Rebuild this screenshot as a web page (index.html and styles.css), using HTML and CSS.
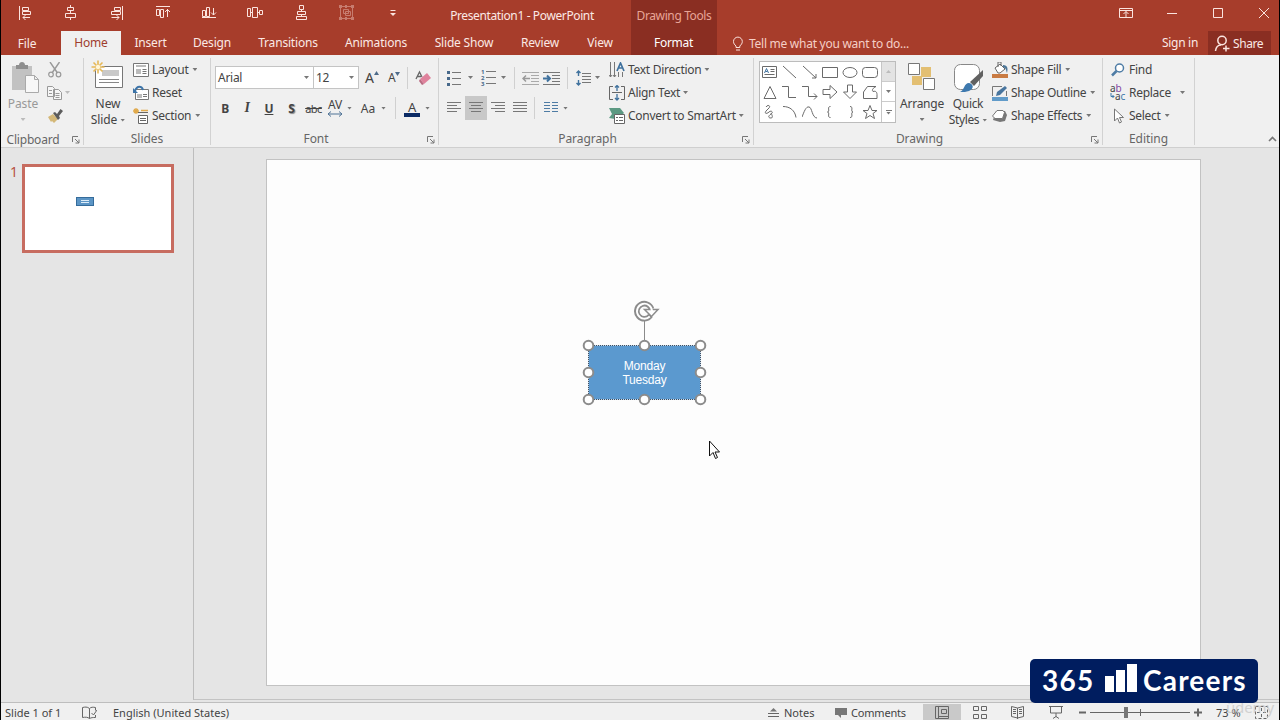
FILE: index.html
```html
<!DOCTYPE html>
<html lang="en">
<head>
<meta charset="utf-8">
<title>Presentation1 - PowerPoint</title>
<link rel="stylesheet" href="styles.css">
</head>
<body>
<div class="app">
  <header class="titlebar">
    <div class="qat">
      <span><svg width="16" height="16"><path d="M2.5 1v14M5.500 2.500h6v3h-6zM5.500 6.500h8v3h-8zM13 12.500H6M8.500 10l-2.500 2.500 2.500 2.500"/></svg></span>
      <span><svg width="16" height="16"><path d="M7.500 0v2M7.500 6v2M7.500 13v2M4.500 2.500h6v3h-6zM2.500 8.500h10v4h-10z"/></svg></span>
      <span><svg width="16" height="16"><path d="M13.500 1v14M5.500 2.500h6v3h-6zM2.500 6.500h9v3h-9zM2.500 12.500H10M7.500 10l2.500 2.500-2.500 2.500"/></svg></span>
      <span><svg width="16" height="16"><path d="M1 1.500h14M1.500 4.500h3v6h-3zM5.500 4.500h3v8h-3zM12.500 12V4M10 7l2.500-2.500L15 7"/></svg></span>
      <span><svg width="16" height="16"><path d="M1 12.500h14M1.500 5.500h3v6h-3zM5.500 2.500h3v9h-3zM12.500 3v7M10 7.500l2.500 2.500 2.500-2.500"/></svg></span>
      <span><svg width="16" height="16"><path d="M.500 3.500h3v8h-3zM5.500 2.500h5v10h-5zM12.500 5.500h3v4h-3zM3.500 7.500h2M10.500 7.500h2"/></svg></span>
      <span><svg width="16" height="16"><path d="M6.500.500h4v4h-4zM4.500 6.500h8v3h-8zM3.500 11.500h10v3h-10zM8.500 4.500v2M8.500 9.500v2"/></svg></span>
      <span class="faded"><svg width="18" height="16"><path d="M2.500 1.500h12v12h-12zM5.500 4.500h5v4h-5zM7.500 6.500h5v4h-5z"/><path class="solid" d="M1 0h3v3H1zM13 0h3v3h-3zM1 12h3v3H1zM13 12h3v3h-3zM7 0h2v3H7zM7 12h2v3H7z"/></svg></span>
      <span><svg width="8" height="8"><path d="M1.500 1.500h5"/><path class="solid" d="M1 4h6L4 7z"/></svg></span>
    </div>
    <div class="doc-title">Presentation1 - PowerPoint</div>
    <div class="context-title">Drawing Tools</div>
    <div class="window-controls">
      <span><svg width="14" height="12"><path d="M.500 1.500h13v9H.500zM.500 3.500h13M7 10V4.500M4.500 7L7 4.500 9.500 7"/></svg></span>
      <span><svg width="12" height="12"><path d="M1 6.500h10"/></svg></span>
      <span><svg width="12" height="12"><path d="M1.500 1.500h9v9h-9z"/></svg></span>
      <span><svg width="12" height="12"><path d="M1 1l10 10M11 1L1 11"/></svg></span>
    </div>
  </header>

  <nav class="tabs">
    <span class="file">File</span>
    <span class="active">Home</span>
    <span>Insert</span>
    <span>Design</span>
    <span>Transitions</span>
    <span>Animations</span>
    <span>Slide Show</span>
    <span>Review</span>
    <span>View</span>
    <span class="format">Format</span>
    <span class="tellme"><svg width="12" height="16"><path d="M4 11.500V10C2.500 8.500 1.500 7.500 1.500 5.500a4.400 4.400 0 0 1 8.800 0c0 2-1 3-2.500 4.500v1.500zM4 14h4"/></svg>Tell me what you want to do...</span>
    <span class="signin">Sign in</span>
    <span class="share"><svg width="17" height="17"><path class="bold" d="M1.500 16c.5-4 2-6 5.500-6M12 10.500v6M9 13.500h6.500"/><circle class="bold" cx="8" cy="5.500" r="4.200"/></svg>Share</span>
  </nav>

  <section class="ribbon">
    <div class="group clipboard">
      <div class="body">
        <div class="big paste">
          <svg class="big-icon" width="32" height="36"><path fill="#c2c2c2" d="M3 8h20v24H3z"/><path fill="#8e8e8e" d="M7 11V7h3c0-4 6-4 6 0h3v4z"/><path fill="#f8f8f8" stroke="#aaa" d="M16.500 17.500h9l4 4v13h-13zM25.500 17.500v4h4"/></svg>
          <span>Paste</span><i class="caret"></i>
        </div>
        <div class="stack">
          <div><svg width="16" height="16"><path stroke="#999" stroke-width="1.400" fill="none" d="M3 0l7.500 11M12.500 0L5 11"/><g fill="none" stroke="#999" stroke-width="1.200"><circle cx="4" cy="12.500" r="2.300"/><circle cx="11.500" cy="12.500" r="2.300"/></g></svg></div>
          <div><svg width="16" height="16"><path fill="#f6f6f6" stroke="#999" d="M.500 1.500h5l2 2v8h-7zM6.500 4.500h5l3 3v7h-8zM2 5.500h3M2 8.500h3M8.500 8.500h4M8.500 10.500h4M8.500 12.500h4"/></svg><i class="caret"></i></div>
          <div><svg width="16" height="16"><path fill="#d4b878" d="M1 9l5-3 5 5-4 4-2-2-1 1z"/><path fill="#5c5c5c" d="M6 5l2-1 2 2 3.500-5L16 3l-4 5 1 2-2 2z"/></svg></div>
        </div>
      </div>
      <footer><span>Clipboard</span><svg class="launch" width="8" height="8"><path d="M.500 6V.500H6M3 3l4 4M7 3.500V7H3.500"/></svg></footer>
    </div>

    <div class="group slides">
      <div class="body">
        <div class="big newslide">
          <svg class="big-icon" width="34" height="34"><path fill="#fff" stroke="#777" d="M5.500 8.500h27v21h-27z"/><path fill="#c9c9c9" d="M12 12h17v6H12z"/><path stroke="#888" d="M9 21.500h20M9 24.500h20"/><circle cx="8" cy="9" r="4" fill="#f0f0f0"/><path stroke="#e6b855" stroke-width="1.600" d="M8 2.500v13M1.500 9h13M3.500 4.500l9 9M12.500 4.500l-9 9"/><circle cx="8" cy="9" r="2.200" fill="#fff5d8"/></svg>
          <span>New</span><span>Slide<i class="caret"></i></span>
        </div>
        <div class="stack">
          <div><svg width="16" height="16"><path fill="#fff" stroke="#777" d="M.500 1.500h15v13H.500z"/><path fill="#bbb" d="M3 3h10v2H3zM3 7h5v5H3z"/><path stroke="#777" d="M9.500 7.500h4M9.500 9.500h4M9.500 11.500h4"/></svg>Layout<i class="caret"></i></div>
          <div><svg width="16" height="16"><path fill="#fff" stroke="#777" d="M2.500 4.500h13v10h-13z"/><path fill="#bbb" d="M4 9h5v4H4z"/><path stroke="#777" d="M10 9.500h4M10 11.500h4"/><path fill="none" stroke="#3d74a8" stroke-width="2" d="M2 6C4 0 9 1 10 5"/><path fill="#3d74a8" d="M0 3l5 5H0z"/></svg>Reset</div>
          <div><svg width="16" height="16"><path stroke="#e0a94a" stroke-width="1.300" d="M3 0v6M0 3h6M1 1l4 4M5 1L1 5M8 2.500h7"/><path fill="#fff" stroke="#666" d="M5.500 7.500h9v8h-9zM5 4.500h10M7 10.500h6M7 12.500h6"/></svg>Section<i class="caret"></i></div>
        </div>
      </div>
      <footer><span>Slides</span></footer>
    </div>

    <div class="group font">
      <div class="body column">
        <div class="tools first">
          <span class="combo family">Arial<i class="caret"></i></span><span class="combo size">12<i class="caret"></i></span>
          <span class="grow">A<svg width="5" height="4"><path d="M0 4l2.500-4L5 4z"/></svg></span>
          <span class="shrink">A<svg width="5" height="4"><path d="M0 0h5L2.500 4z"/></svg></span>
          <b class="divider"></b>
          <span class="eraser"><svg width="16" height="16"><path fill="none" stroke="#666" stroke-width="1.300" d="M1 9l3.500-7L7 7M2.500 6.500H6"/><path fill="#df829c" d="M5 9l7-6 4 5-7 6z"/><path fill="#b96981" d="M4 11l1-2 4 5-2 1z"/></svg></span>
        </div>
        <div class="tools second">
          <span class="fb">B</span><span class="fi">I</span><span class="fu">U</span><span class="fs">S</span><span class="abc">abc</span>
          <span class="av"><em>AV</em><svg width="16" height="6"><path fill="none" stroke="#4f7396" d="M1 3h14M4 .500L1 3l3 2.500M12 .500L15 3l-3 2.500"/></svg></span><i class="caret"></i>
          <span class="case">Aa</span><i class="caret"></i><b class="divider"></b>
          <span class="color">A</span><i class="caret"></i>
        </div>
      </div>
      <footer><span>Font</span><svg class="launch" width="8" height="8"><path d="M.500 6V.500H6M3 3l4 4M7 3.500V7H3.500"/></svg></footer>
    </div>

    <div class="group paragraph">
      <div class="body">
        <div class="para-tools">
          <div class="tools first">
            <svg width="14" height="16"><path stroke="#777" d="M5 2.500h9M5 8.500h9M5 14.500h9"/><path fill="#47698b" d="M0 1h3v3H0zM0 7h3v3H0zM0 13h3v3H0z"/></svg><i class="caret"></i>
            <span class="numbers"><span>1</span><span>2</span><span>3</span></span><i class="caret"></i>
            <b class="divider"></b>
            <svg class="outdent" width="17" height="14"><path stroke="#aaa" d="M0 1.500h17M9 4.500h8M9 7.500h8M9 10.500h8M0 13.500h17"/><path fill="none" stroke="#999" stroke-width="1.500" d="M8 7.500H1M4 4.500L1 7.500l3 3"/></svg>
            <svg class="indent" width="17" height="14"><path stroke="#777" d="M0 1.500h17M9 4.500h8M9 7.500h8M9 10.500h8M0 13.500h17"/><path fill="none" stroke="#3f719d" stroke-width="2" d="M0 7.500h7M4 4.500l3 3-3 3"/></svg>
            <b class="divider"></b>
            <svg class="spacing" width="15" height="16"><path stroke="#777" d="M6 3.500h9M6 6.500h9M6 9.500h9M6 12.500h9"/><path fill="none" stroke="#3f719d" stroke-width="1.400" d="M2.500 1v5M.500 3l2-2 2 2M2.500 15v-5M.500 13l2 2 2-2"/></svg><i class="caret"></i>
          </div>
          <div class="tools second">
            <span><svg width="14" height="12"><path d="M0 .500h14M0 3.500h10M0 6.500h14M0 9.500h10"/></svg></span>
            <span class="on"><svg width="14" height="12"><path d="M0 .500h14M2 3.500h10M0 6.500h14M2 9.500h10"/></svg></span>
            <span><svg width="14" height="12"><path d="M0 .500h14M4 3.500h10M0 6.500h14M4 9.500h10"/></svg></span>
            <span><svg width="14" height="12"><path d="M0 .500h14M0 3.500h14M0 6.500h14M0 9.500h14"/></svg></span>
            <b class="divider"></b>
            <svg class="cols" width="14" height="12"><path d="M0 .500h6M0 3.500h6M0 6.500h6M0 9.500h6M8 .500h6M8 3.500h6M8 6.500h6M8 9.500h6"/></svg><i class="caret"></i>
          </div>
        </div>
        <div class="stack">
          <div><svg width="16" height="16"><path fill="none" stroke="#777" d="M1.500 0v15M5.500 0v15M9.500 10v5M13.500 10v5M0 13l1.500 2L3 13M4 13l1.500 2L7 13"/><path fill="none" stroke="#3f719d" stroke-width="1.700" d="M8 9l3.500-8L15 9M9.500 6h4"/></svg>Text Direction<i class="caret"></i></div>
          <div><svg width="16" height="16"><path fill="none" stroke="#666" d="M4 1.500H.500v13H4M12 1.500h3.500v13H12M3 7.500h10"/><path fill="none" stroke="#3f719d" stroke-width="1.300" d="M8 0v6M6 2.500L8 .500l2 2M8 9v6M6 13l2 2 2-2"/></svg>Align Text<i class="caret"></i></div>
          <div><svg width="16" height="16"><path fill="#5c9982" d="M0 0h11l4 5-2 2H6v4l-6-1 3-4z"/><path fill="#fff" stroke="#666" d="M5.500 6.500h10v9h-10z"/><path stroke="#666" d="M7 9.500h2M10 9.500h4M7 12.500h2M10 12.500h4"/></svg>Convert to SmartArt<i class="caret"></i></div>
        </div>
      </div>
      <footer><span>Paragraph</span><svg class="launch" width="8" height="8"><path d="M.500 6V.500H6M3 3l4 4M7 3.500V7H3.500"/></svg></footer>
    </div>

    <div class="group drawing">
      <div class="body">
        <div class="gallery">
          <div class="shapes">
            <svg width="16" height="16"><path d="M.500 2.500h14v11H.500zM8.500 5.500h4M8.500 7.500h4M2.500 10.500h10"/><path class="blue" d="M2.500 9L4.500 4.500 6.500 9M3.500 7.500h2"/></svg>
            <svg width="16" height="16"><path d="M1 2l13 12"/></svg>
            <svg width="16" height="16"><path d="M1 2l13 12M14 10v4h-4"/></svg>
            <svg width="16" height="16"><path d="M.500 3.500h15v10H.500z"/></svg>
            <svg width="16" height="16"><ellipse cx="8" cy="8.500" rx="7" ry="5"/></svg>
            <svg width="16" height="16"><rect x=".500" y="3.500" width="15" height="10" rx="3"/></svg>
            <svg width="16" height="16"><path d="M8 2.500l6 12H2z"/></svg>
            <svg width="16" height="16"><path d="M0 2.500h6.500v11H14"/></svg>
            <svg width="16" height="16"><path d="M0 2.500h6.500v10H15M12 9.500l3 3-3 3"/></svg>
            <svg width="16" height="16"><path d="M1 5.500h7v-4l7 6.500-7 6.500v-4H1z"/></svg>
            <svg width="16" height="16"><path d="M5.500 1v7h-4L8 14.500 14.500 8h-4V1z"/></svg>
            <svg width="16" height="16"><path d="M5.500 2.500h8.500C11 4 9.500 6 11 7.500c3-1 4 1 4 3v4H1.500V8z"/></svg>
            <svg width="16" height="16"><path d="M4 3c2-3 5-1 3 1L4 7c-2 3 1 3 3 1s5 0 2 2-3 4 0 4 0-5 0-5"/></svg>
            <svg width="16" height="16"><path d="M1 2.500c7 0 12 4 13 11"/></svg>
            <svg width="16" height="16"><path d="M0 13C2 8 4 2 7 3c3 0 3 11 8 11"/></svg>
            <svg width="16" height="16"><path d="M8.500 2.500c-4 0 0 5-3 5.500 3 .5-1 5.500 3 5.500"/></svg>
            <svg width="16" height="16"><path d="M8 2.500c4 0 0 5 3 5.500-3 .5 1 5.500-3 5.500"/></svg>
            <svg width="16" height="16"><path d="M8 1.500l2 5h5l-4 3 1.500 5L8 11.500l-4.500 3L5 9.500l-4-3h5z"/></svg>
          </div>
          <div class="scroll"><span class="off"><i class="caret up"></i></span><span><i class="caret"></i></span><span class="more"><i class="caret"></i></span></div>
        </div>
        <div class="big arrange">
          <svg class="big-icon" width="28" height="34"><path fill="#e3bf72" d="M13 9h10v10H13zM4 18h10v9H4z"/><path fill="#fff" stroke="#777" d="M.500 5.500h11v11H.500zM15.500 20.500h11v11h-11z"/></svg>
          <span>Arrange</span><i class="caret"></i>
        </div>
        <div class="big quick">
          <svg class="big-icon" width="32" height="36"><rect x="2.500" y="6.500" width="25" height="25" rx="6" fill="#fff" stroke="#888"/><path fill="#616161" d="M31 12v6l-9 10-4-4z"/><path fill="#3e79ae" d="M8 34c4-1 4-9 9-9 5 1 5 6 0 8-3 1-5 1-9 1z"/></svg>
          <span>Quick</span><span>Styles<i class="caret"></i></span>
        </div>
        <div class="stack">
          <div><svg width="16" height="16"><path fill="#fff" stroke="#666" d="M3 6l5-4 5 5-5 4H6zM6 5V0h3v4"/><path fill="#4c7799" d="M11 3c5 0 5 4 4 8-1-3-1-5-4-6z"/><path fill="#c97b43" d="M0 12h16v4H0z"/></svg>Shape Fill<i class="caret"></i></div>
          <div><svg width="16" height="16"><path fill="none" stroke="#777" d="M10 1.500H.500V11M14.500 6v5"/><path fill="#48759e" d="M4 11l1-4 8-6 2 2-7 7z"/><path fill="#619bc9" d="M0 12h16v4H0z"/></svg>Shape Outline<i class="caret"></i></div>
          <div><svg width="16" height="16"><path fill="#777" d="M4 3h9l2 4-2 6-5 1-7-2z"/><path fill="#fff" stroke="#777" d="M5 2.500h6l1.500 2-2 6H3L.500 8z"/></svg>Shape Effects<i class="caret"></i></div>
        </div>
      </div>
      <footer><span>Drawing</span><svg class="launch" width="8" height="8"><path d="M.500 6V.500H6M3 3l4 4M7 3.500V7H3.500"/></svg></footer>
    </div>

    <div class="group editing">
      <div class="body">
        <div class="stack">
          <div><svg width="16" height="16"><circle cx="9.500" cy="6" r="4" fill="#fff" stroke="#4e7ca5" stroke-width="1.500"/><path stroke="#4e7ca5" stroke-width="2.500" d="M6.500 9L2 13.500"/></svg>Find</div>
          <div><span class="replace"><span>a<em>b</em></span><span class="to"><svg width="5" height="6"><path d="M1 0v3.500h3M2.500 2L4 3.500 2.500 5"/></svg>a<strong>c</strong></span></span>Replace<i class="caret"></i></div>
          <div><svg width="16" height="16"><path fill="#fff" stroke="#777" d="M4.500 1v12l3-3 2 5 2-1-2-4.500h4z"/></svg>Select<i class="caret"></i></div>
        </div>
      </div>
      <footer><span>Editing</span></footer>
    </div>
    <svg class="collapse" width="9" height="6"><path d="M1 5l3.500-3.500L8 5"/></svg>
  </section>

  <main class="workspace">
    <aside class="thumbs">
      <span class="number">1</span>
      <div class="thumb"><div class="mini"><i></i><i></i></div></div>
    </aside>
    <div class="canvas">
      <div class="slide">
        <div class="shape">
          Monday<br>Tuesday
          <svg class="selection" width="128" height="110"><path stroke="#8b8b8b" d="M64.500 21v24"/><path fill="none" stroke="#c5daee" d="M8 45.500h113M8 99.500h113M8.500 45v55M120.500 45v55"/><path fill="none" stroke="#3f4f60" stroke-dasharray="1 1" d="M8 45.500h113M8 99.500h113M8.500 45v55M120.500 45v55"/><g fill="#fff" stroke="#8c8c8c" stroke-width="2"><circle cx="8.500" cy="45.500" r="4.800"/><circle cx="64.500" cy="45.500" r="4.800"/><circle cx="120.500" cy="45.500" r="4.800"/><circle cx="8.500" cy="72.500" r="4.800"/><circle cx="120.500" cy="72.500" r="4.800"/><circle cx="8.500" cy="99.500" r="4.800"/><circle cx="64.500" cy="99.500" r="4.800"/><circle cx="120.500" cy="99.500" r="4.800"/></g><path fill="none" stroke="#8c8c8c" stroke-width="5.600" d="M70.500 15.500A7.500 7.500 0 1 1 71.500 9"/><path fill="#fff" stroke="#8c8c8c" stroke-width="1.500" d="M64.500 9.500H78L71.500 16.500z"/><path fill="none" stroke="#fff" stroke-width="1.900" d="M69.800 16.500A7.500 7.500 0 1 1 72 11"/></svg>
        </div>
        <svg class="cursor" width="13" height="21"><path fill="#fff" stroke="#111" d="M1.500 1v15l3.500-3.500 2.500 6 2-1-2.500-5.500h4.500z"/></svg>
      </div>
    </div>
  </main>

  <footer class="status">
    <span class="slide-no">Slide 1 of 1</span>
    <svg class="spell" width="15" height="13"><path d="M7.500 2.500C5 .500 3 1 .500 1.500v10c3-.5 5-.5 7 1zM7.500 2.500C9 1 11 1 13.500 1.500v3M7.500 12.500c2-1 3-1 6-1V9M9.500 7l2 2L15 4"/></svg>
    <span class="lang">English (United States)</span>
    <svg class="notes-icon" width="11" height="12"><path d="M0 6.500h11M0 9.500h11"/><path class="solid" d="M2 4.500L5.500 1 9 4.500z"/></svg>
    <span class="notes">Notes</span>
    <svg class="comment-icon" width="12" height="12"><path class="solid" d="M0 1h12v7H6v3L3 8H0z"/></svg>
    <span class="comments">Comments</span>
    <span class="view on"><svg width="14" height="13"><path d="M.500.500h13v12H.500zM3.500.500v12M6.500 3.500h5v4h-5zM3.500 10.500h10"/></svg></span>
    <span class="view"><svg width="14" height="13"><path d="M.500.500h5v4h-5zM8.500.500h5v4h-5zM.500 8.500h5v4h-5zM8.500 8.500h5v4h-5z"/></svg></span>
    <span class="view"><svg width="14" height="13"><path d="M6.500 2L.500.500v10l6 1.500 6-1.500V.500zM6.500 2v11M2 3.500h3M2 5.500h3M2 7.500h3M8 3.500h3M8 5.500h3M8 7.500h3"/></svg></span>
    <span class="view"><svg width="14" height="13"><path d="M0 .500h14M1.500 1v6h11V1M7 7v4M4 12.500l3-2 3 2"/></svg></span>
    <svg class="zoom" width="124" height="13"><path d="M11 6.500h100M61.500 3v7"/><path class="bold" d="M0 6.500h7M115 6.500h8M119 2.500v8"/><path class="solid" d="M45 1h4v11h-4z"/></svg>
    <span class="percent">73 %</span>
    <svg class="fit" width="14" height="13"><path stroke-dasharray="3 2" d="M.500.500h12v12H.500z"/><path d="M6.500 2v3M6.500 8v3M2 6.500h3M8 6.500h3"/></svg>
  </footer>
  <div class="watermark">ûdemy</div>
  <div class="brand"><span class="num">365</span><svg width="32" height="28"><path fill="#fff" d="M0 12h9v16H0zM11 6h9v22h-9zM22 0h10v28H22z"/></svg><span>Careers</span></div>
</div>
</body>
</html>
```
FILE: styles.css
```css
* { box-sizing: border-box; }
body { margin: 0; background: #000; font-family: "Noto Sans", sans-serif; font-size: 12px; color: #444; overflow: hidden; }
svg { display: block; flex: none; }
.app { position: relative; width: 1280px; height: 720px; padding: 0 1px; display: flex; flex-direction: column; white-space: nowrap; letter-spacing: -.15px; overflow: hidden; }

.titlebar { height: 31px; flex: none; background: #a73d2b; display: flex; color: #fbe9e5; overflow: hidden; letter-spacing: -.38px; }
.titlebar > div { flex: none; }
.titlebar svg path, .tabs svg path, .tabs svg circle { fill: none; stroke: #fbe4df; }
.titlebar svg .solid { fill: #fbe4df; stroke: none; }
.tabs svg .bold { stroke-width: 1.5; }
.qat { display: flex; margin-left: 1px; height: 26px; }
.qat span, .window-controls span { width: 46px; flex: none; display: flex; align-items: center; justify-content: center; }
.qat .faded { opacity: .38; }
.doc-title { width: 212px; text-align: center; line-height: 31px; }
.context-title { width: 86px; margin-left: 3px; text-align: center; line-height: 31px; background: #8a2e22; color: #e8a597; }
.window-controls { display: flex; margin-left: 386px; height: 26px; }

.tabs { height: 24px; flex: none; background: #a73d2b; color: #fbe9e5; display: grid; grid-template-columns: 52px 8px 60px 59px 64px 88px 88px 88px 64px 56px 3px 86px 440px 46px 5px 63px; line-height: 24px; text-align: center; letter-spacing: -.18px; }
.tabs .active { grid-column: 3; background: #f0f0f0; color: #9e3e2e; }
.tabs .format { grid-column: 12; background: #8a2e22; color: #fff; letter-spacing: -.3px; padding-right: 1px; }
.tabs .tellme { display: flex; align-items: center; gap: 5px; padding-left: 15px; color: #f5cfc6; letter-spacing: -.27px; }
.tabs .file { line-height: 26px; }
.tabs .signin { letter-spacing: -.3px; }
.tabs .share { grid-column: 16; background: #8a2e22; display: flex; align-items: center; gap: 2px; padding-left: 6px; margin-bottom: 1px; letter-spacing: -.4px; }

.ribbon { height: 93px; flex: none; background: #f0f0f0; border-bottom: 1px solid #cfcfcf; display: flex; letter-spacing: -.28px; }
.group { display: flex; flex-direction: column; flex: none; border-right: 1px solid #d2d2d2; margin-top: 3px; height: 87px; }
.clipboard { width: 83px; }
.slides { width: 127px; }
.font { width: 228px; }
.paragraph { width: 315px; }
.drawing { width: 349px; }
.editing { width: 92px; }
.body { display: flex; height: 71px; flex: none; }
.body.column { flex-direction: column; }
.group footer { height: 19px; flex: none; line-height: 20px; display: grid; grid-template-columns: 1fr; color: #666; align-items: center; justify-items: center; letter-spacing: -.05px; }
.group footer > * { grid-row: 1; grid-column: 1; }
.group footer span { margin-right: 17px; }
.clipboard footer span { padding-top: 1px; margin-right: 18px; letter-spacing: -.2px; }
.slides footer span, .editing footer span { margin-right: 0; }
.group footer .launch { justify-self: end; margin: 1px 3px 0 0; }
.launch path, .collapse path { fill: none; stroke: #777; }
.collapse path { stroke-width: 1.6; }
.collapse { margin: 81px 0 0 73px; }
.caret { display: inline-block; width: 5px; height: 3px; background: #777; clip-path: polygon(0 0, 100% 0, 50% 100%); flex: none; }
.caret.up { transform: rotate(180deg); background: #bbb; }
.stack { display: flex; flex-direction: column; }
.stack > div { height: 23px; display: flex; align-items: center; gap: 3px; }
.stack .caret { margin-left: 1px; }
.big { display: flex; flex-direction: column; align-items: center; line-height: 16px; letter-spacing: -.1px; }
.big .big-icon { height: 38px; }
.big > .caret { margin-top: 6px; }
.big span { display: flex; align-items: center; gap: 3px; }
.paste { width: 44px; color: #999; }
.paste .big-icon { margin-left: 3px; }
.paste .caret, .clipboard .stack .caret { background: #bbb; }
.clipboard .stack { margin-left: 2px; }
.clipboard .stack > div { gap: 1px; }
.newslide { width: 48px; }
.newslide .big-icon { margin-right: 2px; }
.slides .stack { margin-left: 1px; }
.divider { width: 1px; height: 22px; background: #d0d0d0; flex: none; }
.tools { display: flex; align-items: center; }
.tools.first { height: 23px; margin-top: 8px; }
.tools.second { height: 24px; margin-top: 7px; }

.font .first { padding-left: 4px; }
.font .second { padding-left: 3px; }
.combo { height: 23px; border: 1px solid #c4c4c4; background: #fff; display: flex; align-items: center; justify-content: space-between; padding: 0 4px 0 2px; }
.family { width: 99px; }
.size { width: 46px; margin-left: -1px; }
.grow { font-size: 14px; width: 23px; display: flex; margin-left: 6px; }
.shrink { font-size: 12px; width: 19px; display: flex; }
.grow svg, .shrink svg { margin-top: 3px; fill: #4d6b8a; }
.eraser { margin-left: 7px; }
.fb, .fi, .fu, .fs { width: 22px; text-align: center; font-weight: bold; }
.fi { font-style: italic; font-family: "Liberation Serif", serif; font-size: 14px; }
.fu { text-decoration: underline; }
.fs { text-shadow: 1px 1px 1px #888; width: 23px; }
.abc { width: 21px; font-size: 11px; text-decoration: line-through; text-align: center; letter-spacing: -.5px; }
.av { width: 22px; display: flex; flex-direction: column; align-items: center; }
.av em { font-style: normal; line-height: 12px; }
.av + .caret { margin-left: 1px; }
.case { width: 26px; text-align: center; margin-left: 3px; letter-spacing: 0; }
.font .second .divider { margin: 0 8px 0 9px; }
.color { width: 16px; height: 17px; line-height: 14px; font-size: 13px; border-bottom: 4px solid #0b2a64; text-align: center; }
.color + .caret { margin-left: 5px; }

.para-tools { width: 170px; }
.para-tools .first { padding-left: 8px; }
.para-tools .first > .caret { margin-left: 7px; margin-right: 8px; }
.numbers { width: 15px; height: 18px; display: grid; grid-template-rows: repeat(3, 6px); font-size: 6px; line-height: 6px; font-weight: bold; color: #47698b; }
.numbers span { display: flex; align-items: center; gap: 2px; }
.numbers span::after { content: ""; flex: 1; height: 1px; background: #777; }
.para-tools .numbers + .caret { margin-left: 5px; }
.outdent { margin-left: 7px; }
.indent { margin: 0 7px 0 4px; }
.spacing { margin-left: 8px; }
.para-tools .first .spacing + .caret { margin-left: 4px; }
.para-tools .second { padding-left: 4px; }
.para-tools .second span { width: 22px; height: 24px; flex: none; display: flex; align-items: center; justify-content: center; }
.para-tools .second svg { stroke: #777; }
.para-tools .second .on { background: #c8c8c8; }
.para-tools .second .divider { margin: 0 9px 0 3px; }
.para-tools .second .cols { stroke: #4f7ca4; }
.cols + .caret { margin-left: 5px; }
.paragraph .stack .caret { margin-left: 0; }

.gallery { margin: 3px 0 0 5px; width: 137px; height: 62px; display: flex; border: 1px solid #bcbcbc; background: #fff; }
.shapes { display: grid; grid-template-columns: repeat(6, 20px); grid-template-rows: repeat(3, 20px); align-items: center; justify-items: center; width: 121px; }
.shapes svg { fill: none; stroke: #6a6a6a; }
.shapes .blue { stroke: #3f719d; }
.scroll { width: 14px; border-left: 1px solid #c6c6c6; display: grid; grid-template-rows: repeat(3, 1fr); }
.scroll span { display: flex; align-items: center; justify-content: center; border-bottom: 1px solid #ccc; }
.scroll .off { background: #e3e3e3; }
.scroll .more { border: 0; flex-direction: column; gap: 1px; }
.more::before { content: ""; width: 6px; height: 1px; background: #777; }
.arrange { width: 52px; letter-spacing: -.25px; }
.quick { width: 40px; letter-spacing: -.35px; }
.drawing .stack { margin-left: 4px; }
.drawing .stack > div { letter-spacing: -.33px; }
.editing .stack { margin-left: 7px; }
.replace { width: 16px; font-size: 10px; line-height: 8px; display: flex; flex-direction: column; letter-spacing: -.2px; padding-bottom: 2px; flex: none; }
.replace em { font-style: normal; color: #8244a0; }
.replace strong { font-weight: normal; color: #3c78a9; }
.replace .to { display: flex; }
.replace .to svg { margin-top: 1px; fill: none; stroke: #3c78a9; }
.editing .replace ~ .caret { margin-left: 6px; }

.workspace { height: 554px; flex: none; background: #e5e5e5; display: flex; }
.thumbs { width: 193px; border-right: 1px solid #bdbdbd; display: flex; padding: 16px 0 0 9px; height: 552px; }
.number { width: 12px; color: #b85143; font-size: 14px; line-height: 16px; }
.thumb { width: 152px; height: 89px; border: 3px solid #c76c60; background: #fff; padding: 30px 0 0 51px; }
.mini { width: 18px; height: 9px; background: #5c95c5; border: 1px solid #356c9b; display: flex; flex-direction: column; align-items: center; justify-content: center; gap: 1px; }
.mini i { width: 8px; height: 1px; background: #dcecf8; }
.canvas { flex: 1; border-bottom: 1px solid #c3c3c3; height: 552px; padding: 11px 0 0 72px; margin-left: 0; }
.slide { width: 935px; height: 527px; border: 1px solid #c2c2c2; background: #fdfdfd; position: relative; }
.shape { position: absolute; left: 321px; top: 185px; width: 113px; height: 55px; background: #5b99cf; color: #fff; font: 12px/14px "Liberation Sans", Arial, sans-serif; letter-spacing: -.2px; text-align: center; padding-top: 14px; }
.selection { position: absolute; left: -8px; top: -45px; }
.cursor { position: absolute; left: 441px; top: 280px; }

.status { height: 18px; flex: none; background: #f0f0f0; border-top: 1px solid #bebebe; display: flex; align-items: center; font-size: 11px; padding: 2px 0 0 4px; letter-spacing: 0; }
.status svg { fill: none; stroke: #666; }
.status .solid { fill: #777; stroke: none; }
.status .bold { stroke-width: 2; }
.slide-no { width: 77px; }
.spell { margin-right: 16px; }
.lang { width: 655px; }
.notes-icon { margin-right: 5px; }
.notes { width: 51px; }
.comment-icon { margin-right: 4px; }
.comments { width: 72px; letter-spacing: -.2px; }
.view { width: 38px; height: 18px; display: flex; align-items: center; justify-content: center; flex: none; }
.view.on { background: #c9c9c9; }
.zoom { margin-left: 4px; }
.percent { width: 39px; margin-left: 13px; }

.brand { position: absolute; left: 1030px; top: 659px; width: 228px; height: 44px; border-radius: 5px; background: #001d5f; color: #fff; font: bold 28px/43px Lato, sans-serif; letter-spacing: 1.2px; display: flex; padding-left: 12px; }
.brand .num { width: 63px; }
.brand svg { margin: 5px 6px 0 0; }
.watermark { position: absolute; left: 1226px; top: 697px; color: #c4c4c4; font-size: 15px; line-height: 20px; opacity: .7; }
```
